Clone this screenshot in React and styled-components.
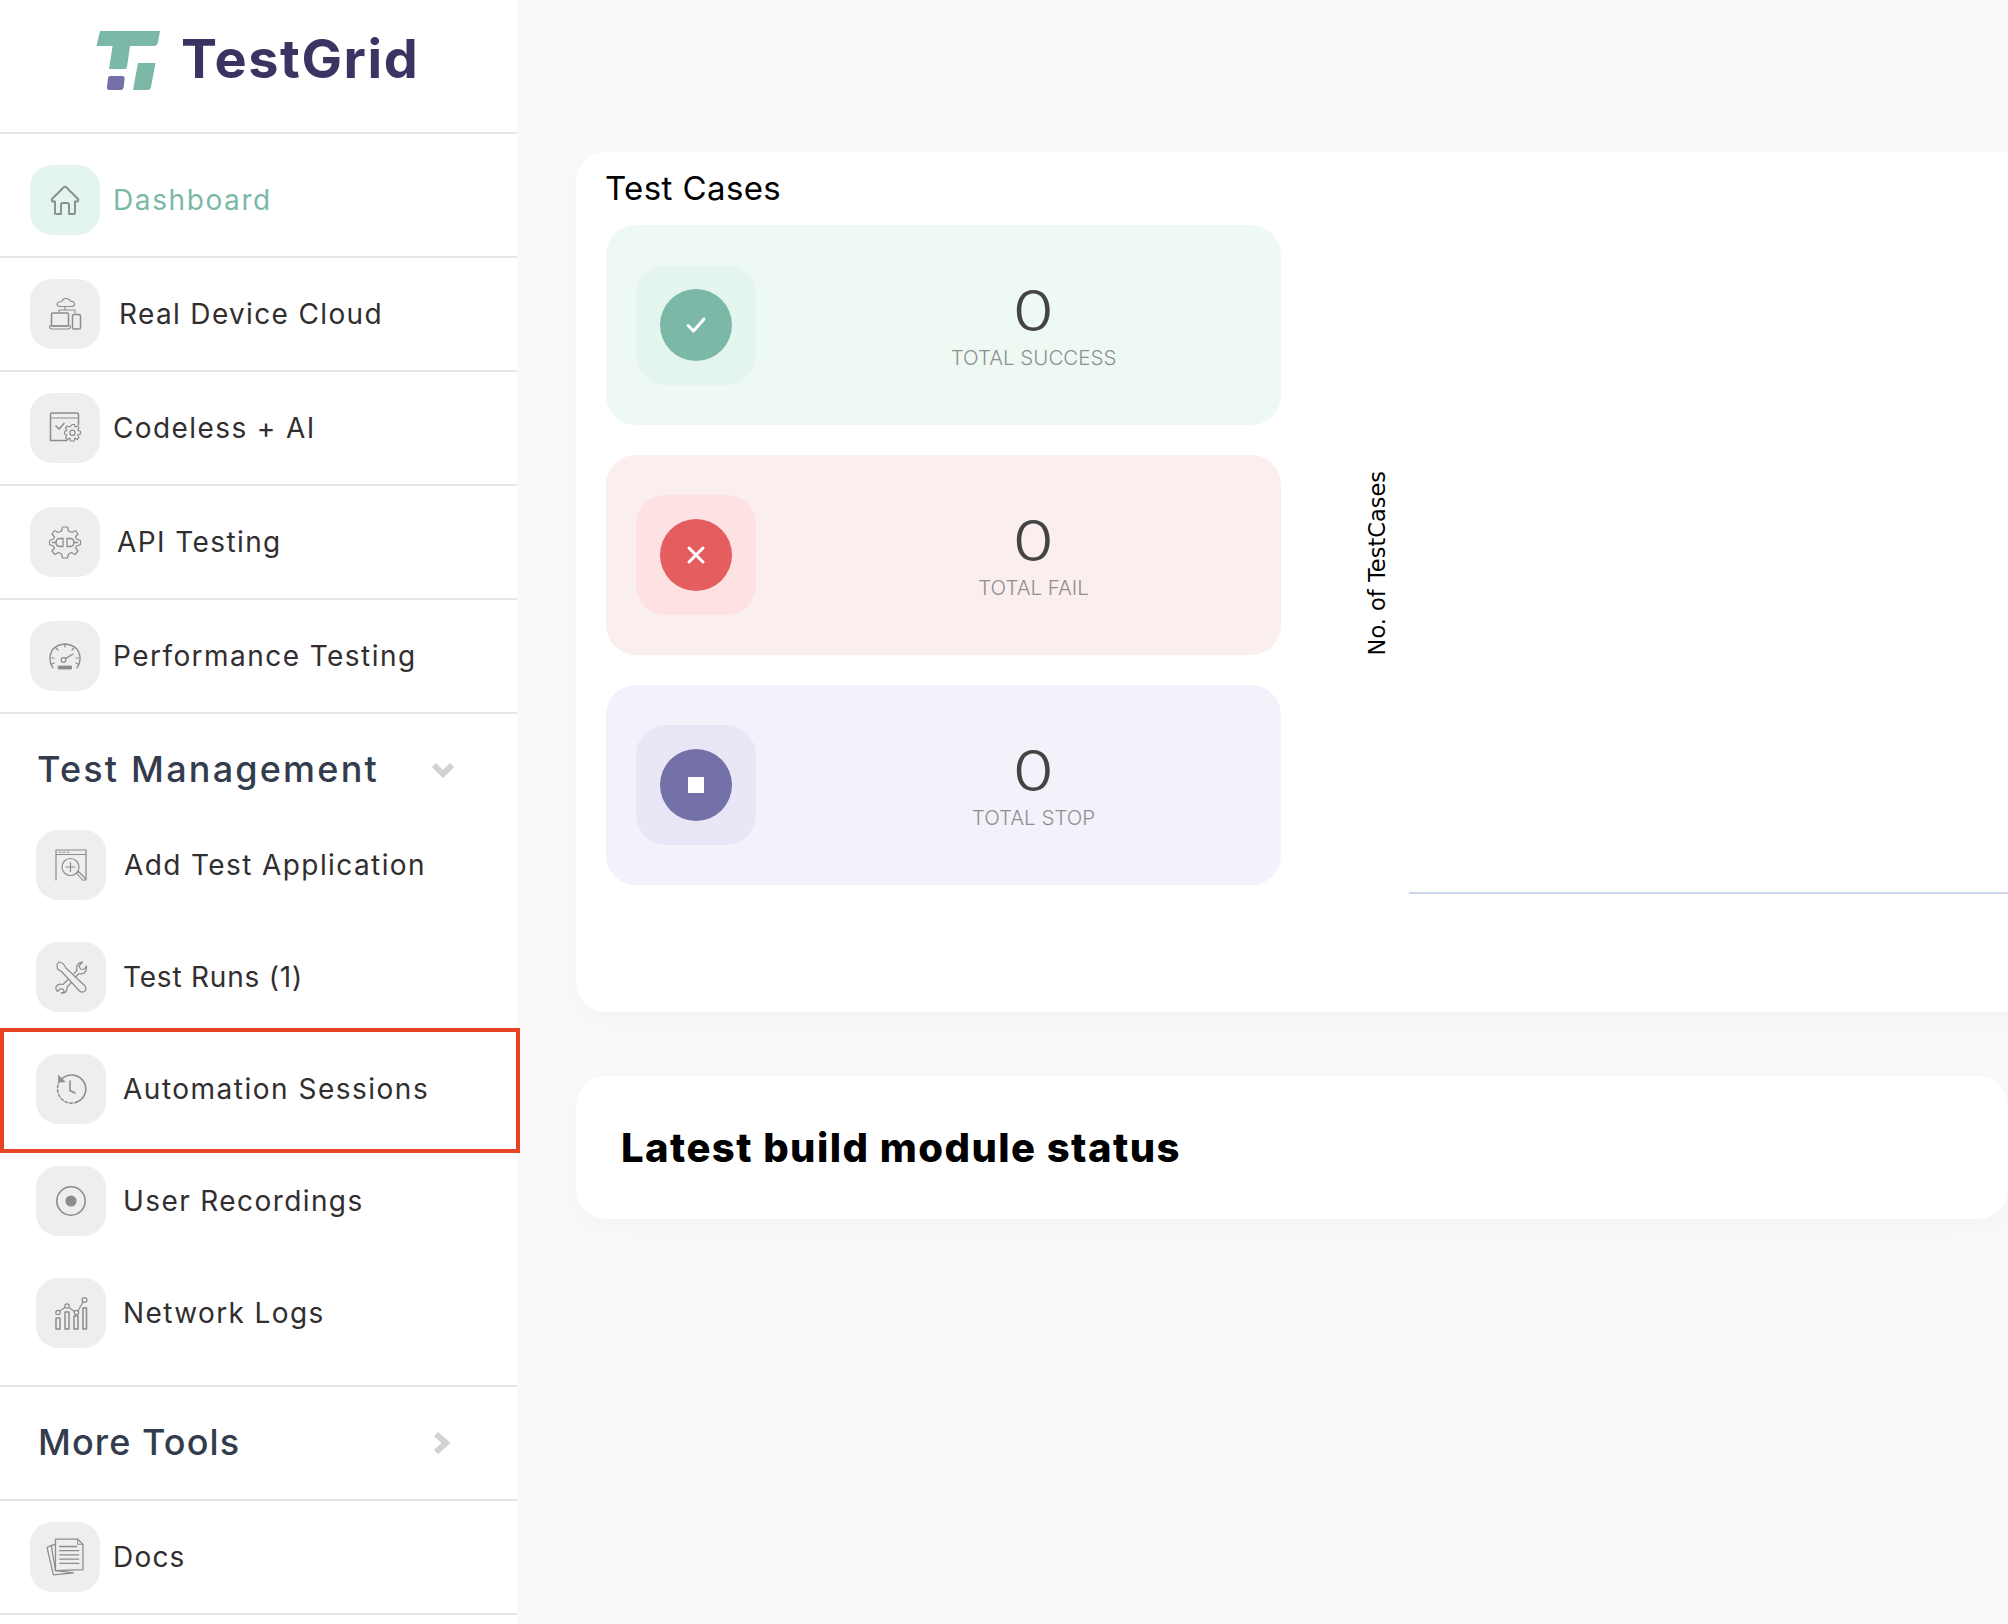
import React from "react"
import styled, { createGlobalStyle } from "styled-components"

const GlobalStyle = createGlobalStyle`
    html, body {
        margin: 0;
        padding: 0;
        background: #fafafc;
    }
    * {
        box-sizing: border-box;
    }
`

const Icons = {
    home: (
        <>
            <path d="M3 15 L14.5 3.5 Q16 2.2 17.5 3.5 L29 15 Q30 17 28 17.5 L26 17.5 L26 29 Q26 30 25 30 L20 30 L20 21 Q20 19 18 19 L14 19 Q12 19 12 21 L12 30 L7 30 Q6 30 6 29 L6 17.5 L4 17.5 Q2 17 3 15 Z" strokeWidth="1.9" />
        </>
    ),
    cloud: (
        <>
            <path d="M11 8.5 H22 Q26 8.5 25.5 5.5 Q25 3 22 3.5 Q20.5 0.5 17 0.5 Q13.5 0.5 13 3.5 Q8.5 3.5 8 6 Q8 8.5 11 8.5 Z" strokeWidth="1.1" />
            <path d="M16 8.5 V12 M10 15 V12 H26 V15" strokeWidth="1.1" />
            <rect x="2.5" y="15" width="17" height="13" rx="1.2" />
            <path d="M0.5 28 H21.5 Q21.5 31 19.5 31 H2.5 Q0.5 31 0.5 28 Z" strokeWidth="1.1" />
            <rect x="23.5" y="16.5" width="8" height="14.5" rx="1.6" />
        </>
    ),
    codeless: (
        <>
            <path d="M18 28.5 H1.5 V2.5 Q1.5 1 3 1 H28 Q29.5 1 29.5 2.5 V13" />
            <path d="M1.5 6 H29.5" strokeWidth="1.1" />
            <path d="M7 14 L10 17 L15 11.5" />
            <path d="M23 12.5 L25.5 12.5 L26 15 L28.5 14 L30 16 L28.5 18 L31.5 19.5 V22 L28.5 23 L30 25.5 L28 27.5 L26 26 L25 29 H21.5 L21 26 L18.5 27.5 L16.5 25.5 L18 23 L15.5 22 V19.5 L18 18.5 L16.5 16 L18.5 14 L21 15 Z" strokeWidth="1.2" />
            <circle cx="23.5" cy="20.8" r="2.6" strokeWidth="1.2" />
        </>
    ),
    api: (
        <>
            <path d="M13.5 1 H18.5 L19.5 5 L23 6.5 L26.5 4.5 L29 8 L26.5 11 L27.5 13 L31.5 14.5 V18.5 L27.5 20 L26.5 22 L29 25 L26 28.5 L22.5 26.5 L19.5 28 L18.5 32 H13.5 L12.5 28 L9.5 26.5 L6 28.5 L3 25 L5.5 22 L4.5 20 L0.5 18.5 V14.5 L4.5 13 L5.5 11 L3 8 L5.5 4.5 L9 6.5 L12.5 5 Z" strokeWidth="1.2" />
            <path d="M14 12.5 H10.5 Q7 13 7 16.5 Q7 20 10.5 20.5 H14 Z M18 12.5 H21.5 Q25 13 25 16.5 Q25 20 21.5 20.5 H18 Z" strokeWidth="1.3" />
            <path d="M3.5 16.5 H7 M25 16.5 H28.5" strokeWidth="1.3" />
        </>
    ),
    gauge: (
        <>
            <path d="M4 28 Q0.5 23 1 17 Q2.5 5 16 4 Q29.5 5 31 17 Q31.5 23 28 28" strokeWidth="1.3" />
            <path d="M16 4 V7 M7 8 L9 10 M25 8 L23 10 M2 18 H5 M27 18 H30 M3 24 L5 23 M29 24 L27 23" strokeWidth="1.2" />
            <circle cx="14.5" cy="20" r="2.4" strokeWidth="1.2" />
            <path d="M16.5 18.6 L24 14" strokeWidth="1.3" />
            <rect x="9.5" y="26" width="13" height="3" fill="#8c8c8c" strokeWidth="0.8" />
        </>
    ),
    application: (
        <>
            <path d="M1 31 V1 H31 V31 M1 5.5 H31" strokeWidth="1.2" />
            <path d="M4 3.2 H6 M8 3.2 H10 M12 3.2 H14" strokeWidth="1" />
            <circle cx="15.5" cy="18" r="8.5" strokeWidth="1.2" />
            <path d="M15.5 13.5 V22.5 M11 18 H20" strokeWidth="1.2" />
            <path d="M21.5 24 L23.5 22.5 L30 29 Q30.5 31 28.5 31.5 Q27.5 31.5 21.5 24 Z" strokeWidth="1.2" />
        </>
    ),
    tools: (
        <>
            <path d="M2 3.5 L4 1 L8 2.5 L11 7 L30 25 Q32 28 29.5 30.5 Q27 32 24.5 30 L7 11 L2.5 8 Z" strokeWidth="1.2" />
            <path d="M19 12.5 L22 9.5 Q20.5 4 25 1.5 L27.5 1 L24 5 L25.5 8 L29 8.5 L31.5 5 Q32 10 29 12 Q26.5 13.5 24 12.5 L20.5 16" strokeWidth="1.2" />
            <path d="M12.5 19 L8 23.5 Q3 22 1 26 Q0.5 29 2.5 30.5 L5.5 27.5 L8.5 28.5 L9 31 L6 32 Q11 32.5 12 28 L12 26 L16 22" strokeWidth="1.2" />
        </>
    ),
    history: (
        <>
            <path d="M6 6.5 Q10.5 2 16.5 2 A14 14 0 0 1 22 29" />
            <path d="M22 29 A14 14 0 0 1 2.5 16 Q2.5 10 6 6.5" strokeDasharray="2.6 2.2" />
            <path d="M3.5 2.5 L3.5 9 L10 9 Z" fill="#8c8c8c" strokeWidth="0.6" />
            <path d="M15 8 V17.5 L20 20" strokeWidth="1.6" />
        </>
    ),
    record: (
        <>
            <circle cx="16" cy="16" r="14.2" strokeWidth="1.6" />
            <circle cx="16" cy="16" r="5.6" fill="#8c8c8c" stroke="none" />
        </>
    ),
    chart: (
        <>
            <rect x="1" y="21" width="4" height="11" />
            <rect x="10" y="15" width="4" height="17" />
            <rect x="19" y="19" width="4" height="13" />
            <rect x="28" y="11" width="3.5" height="21" />
            <path d="M4.5 14 L10 10.5 M14 10.5 L19.5 14.5 M23 14 L28 5" strokeWidth="1.2" />
            <circle cx="3" cy="15.5" r="2.2" strokeWidth="1.2" />
            <circle cx="12" cy="9" r="2.2" strokeWidth="1.2" />
            <circle cx="21.5" cy="15.5" r="2.2" strokeWidth="1.2" />
            <circle cx="29.5" cy="3" r="2.4" strokeWidth="1.2" />
        </>
    ),
    docs: (
        <>
            <path d="M9 1 H30 L35 6 V30 L9 31 Z" strokeWidth="1.2" />
            <path d="M30 1 V6 H35" strokeWidth="1" />
            <path d="M13 8 H29 M13 12 H31 M13 16 H31 M13 20 H31 M13 24 H31" strokeWidth="1.3" />
            <path d="M9 6 L5 7 L9 31 L26 33 L9 31 M5 7 L1 9 L7 35 L26 33" strokeWidth="1.2" />
        </>
    ),
}

function NavIcon({ name }) {
    const wide = name === "docs"
    return (
        <GlyphSvg viewBox={wide ? "0 0 36 36" : "0 0 33 33"} $wide={wide}>
            {Icons[name]}
        </GlyphSvg>
    )
}

function NavItem({ icon, label, gap, spacing, active }) {
    return (
        <>
            <IconTile $active={active}>
                <NavIcon name={icon} />
            </IconTile>
            <NavLabel $gap={gap} $spacing={spacing} $active={active}>{label}</NavLabel>
        </>
    )
}

const topItems = [
    { icon: "cloud", label: "Real Device Cloud", gap: 19, spacing: 1.35 },
    { icon: "codeless", label: "Codeless + AI", gap: 13, spacing: 1.4 },
    { icon: "api", label: "API Testing", gap: 17, spacing: 1.4 },
    { icon: "gauge", label: "Performance Testing", gap: 13, spacing: 1.45 },
]

const managementItems = [
    { icon: "application", label: "Add Test Application", gap: 18, spacing: 1.4 },
    { icon: "tools", label: "Test Runs (1)", gap: 17, spacing: 0.8 },
    { icon: "history", label: "Automation Sessions", gap: 17, spacing: 1.5, marked: true },
    { icon: "record", label: "User Recordings", gap: 17, spacing: 1.4 },
    { icon: "chart", label: "Network Logs", gap: 17, spacing: 1.4 },
]

const stats = [
    { kind: "success", label: "TOTAL SUCCESS" },
    { kind: "fail", label: "TOTAL FAIL" },
    { kind: "stop", label: "TOTAL STOP" },
]

const statColors = {
    success: { card: "#eff9f4", tile: "#e4f5ed", dot: "#7bb8a8" },
    fail: { card: "#fbeeee", tile: "#fde1e3", dot: "#e45d5f" },
    stop: { card: "#f3f2fb", tile: "#e9e7f5", dot: "#7470a8" },
}

function StatIcon({ kind }) {
    if (kind === "stop") return <StopSquare />
    return (
        <svg width="26" height="26" viewBox="0 0 26 26" fill="none" stroke="#fff" strokeWidth="3" strokeLinecap="round" strokeLinejoin="round">
            {kind === "success" ? <path d="M5 13.5 L10.5 19 L21 7" /> : <path d="M6 6 L20 20 M20 6 L6 20" />}
        </svg>
    )
}

function App() {
    return (
        <Page>
            <GlobalStyle />
            <Sidebar>
                <LogoBar>
                    <svg width="65" height="60" viewBox="0 0 65 60">
                        <path d="M4 0 H64 L62 11 Q61.2 15 58 15 H34 L31 36 Q30.6 38 29 38 H13 L16.6 15 H0.5 Z" fill="#7bb8a8" />
                        <path d="M42 32 H59.5 L55 56 Q54.3 59 52 59 H37 Z" fill="#7bb8a8" />
                        <path d="M14 45 H26 Q29 45 28.6 48 L27.6 56 Q27.2 59 25 59 H13.5 Q10.6 59 11 56 L12 47 Q12.2 45 14 45 Z" fill="#7470a8" />
                    </svg>
                    <LogoText>TestGrid</LogoText>
                </LogoBar>

                <NavRow $top={31}>
                    <NavItem icon="home" label="Dashboard" gap={13} spacing={1.6} active />
                </NavRow>
                {topItems.map(item => (
                    <NavRow key={item.label}>
                        <NavItem {...item} />
                    </NavRow>
                ))}

                <Section>
                    <SectionHead>
                        <SectionTitle $spacing={2.2}>Test Management</SectionTitle>
                        <Chevron width="24" height="16" viewBox="0 0 24 16">
                            <path d="M3 3 L12 12 L21 3" />
                        </Chevron>
                    </SectionHead>
                    <SubList>
                        {managementItems.map(item => (
                            <SubRow key={item.label}>
                                <NavItem icon={item.icon} label={item.label} gap={item.gap} spacing={item.spacing} />
                                {item.marked && <Marker />}
                            </SubRow>
                        ))}
                    </SubList>
                </Section>

                <ToolsRow>
                    <SectionTitle $spacing={1.1}>More Tools</SectionTitle>
                    <Chevron width="18" height="24" viewBox="0 0 18 24">
                        <path d="M3 3 L13 12 L3 21" />
                    </Chevron>
                </ToolsRow>
                <NavRow>
                    <NavItem icon="docs" label="Docs" gap={13} spacing={1.2} />
                </NavRow>
            </Sidebar>

            <Main>
                <ChartCard>
                    <StatsColumn>
                        <CardTitle>Test Cases</CardTitle>
                        <StatList>
                            {stats.map(stat => (
                                <StatCard key={stat.kind} $kind={stat.kind}>
                                    <StatTile $kind={stat.kind}>
                                        <StatDot $kind={stat.kind}>
                                            <StatIcon kind={stat.kind} />
                                        </StatDot>
                                    </StatTile>
                                    <StatBody>
                                        <StatValue>0</StatValue>
                                        <StatLabel>{stat.label}</StatLabel>
                                    </StatBody>
                                </StatCard>
                            ))}
                        </StatList>
                    </StatsColumn>
                    <ChartArea>
                        <AxisTitle>No. of TestCases</AxisTitle>
                        <AxisLine />
                    </ChartArea>
                </ChartCard>

                <BuildCard>
                    <BuildTitle>Latest build module status</BuildTitle>
                </BuildCard>
            </Main>
        </Page>
    )
}

const Page = styled.div`
    display: flex;
    width: 2008px;
    height: 1624px;
    overflow: hidden;
    background: #fafafc;
    font-family: Inter, "Liberation Sans", sans-serif;
`

const Sidebar = styled.aside`
    flex: 0 0 517px;
    display: flex;
    flex-direction: column;
    background: #fff;
    box-shadow: 0 0 6px rgba(0, 0, 0, 0.03);
    position: relative;
    z-index: 1;
`

const LogoBar = styled.div`
    display: flex;
    align-items: center;
    gap: 20px;
    height: 134px;
    padding: 0 0 10px 96px;
    border-bottom: 2px solid #e5e5e5;
`

const LogoText = styled.span`
    margin-top: -5px;
    font-size: 54px;
    font-weight: 700;
    letter-spacing: 1.6px;
    color: #3a3462;
`

const NavRow = styled.div`
    display: flex;
    align-items: center;
    padding: ${props => props.$top || 21}px 30px 21px;
    border-bottom: 2px solid #e5e5e5;
`

const IconTile = styled.div`
    flex: 0 0 70px;
    height: 70px;
    display: flex;
    align-items: center;
    justify-content: center;
    border-radius: 22px;
    background: ${props => (props.$active ? "#e3f5ee" : "#eeeeee")};
`

const GlyphSvg = styled.svg`
    width: ${props => (props.$wide ? 38 : 33)}px;
    height: ${props => (props.$wide ? 38 : 33)}px;
    fill: none;
    stroke: #8c8c8c;
    stroke-width: 1.5;
    stroke-linejoin: round;
    stroke-linecap: round;
`

const NavLabel = styled.span`
    margin-left: ${props => props.$gap}px;
    font-size: 28px;
    letter-spacing: ${props => props.$spacing}px;
    color: ${props => (props.$active ? "#7bb8a8" : "#322e30")};
`

const Section = styled.div`
    display: flex;
    flex-direction: column;
    padding-bottom: 37px;
    border-bottom: 2px solid #e5e5e5;
`

const SectionHead = styled.div`
    display: flex;
    align-items: center;
    justify-content: space-between;
    height: 112px;
    margin-bottom: 4px;
    padding: 0 62px 0 37px;
`

const SectionTitle = styled.h3`
    margin: 0 0 2px;
    font-size: 36px;
    font-weight: 500;
    letter-spacing: ${props => props.$spacing}px;
    color: #333c4d;
`

const Chevron = styled.svg`
    fill: none;
    stroke: #d2d2d2;
    stroke-width: 6;
`

const SubList = styled.div`
    display: flex;
    flex-direction: column;
    gap: 42px;
    padding-left: 36px;
`

const SubRow = styled.div`
    display: flex;
    align-items: center;
    position: relative;
`

const Marker = styled.div`
    position: absolute;
    top: -26px;
    bottom: -29px;
    left: -36px;
    right: -3px;
    border: 4px solid #ea4225;
`

const ToolsRow = styled.div`
    display: flex;
    align-items: center;
    justify-content: space-between;
    height: 114px;
    padding: 0 66px 0 38px;
    border-bottom: 2px solid #e5e5e5;
`

const Main = styled.main`
    flex: 1;
    min-width: 0;
    display: flex;
    flex-direction: column;
    gap: 64px;
    padding: 152px 0 0 59px;
`

const ChartCard = styled.section`
    display: flex;
    flex: none;
    width: 1600px;
    height: 860px;
    border-radius: 30px;
    background: #fff;
    box-shadow: 0 8px 30px rgba(0, 0, 0, 0.035);
`

const StatsColumn = styled.div`
    flex: 0 0 705px;
    padding: 16px 0 0 29px;
`

const CardTitle = styled.h2`
    margin: 0 0 16px;
    height: 41px;
    font-size: 33px;
    line-height: 41px;
    font-weight: 400;
    letter-spacing: 0.4px;
    color: #000;
`

const StatList = styled.div`
    display: flex;
    flex-direction: column;
    gap: 30px;
    margin-left: 1px;
`

const StatCard = styled.div`
    display: flex;
    align-items: center;
    width: 675px;
    height: 200px;
    padding-left: 30px;
    border-radius: 30px;
    background: ${props => statColors[props.$kind].card};
`

const StatTile = styled.div`
    flex: 0 0 120px;
    height: 120px;
    display: flex;
    align-items: center;
    justify-content: center;
    border-radius: 30px;
    background: ${props => statColors[props.$kind].tile};
`

const StatDot = styled.div`
    width: 72px;
    height: 72px;
    display: flex;
    align-items: center;
    justify-content: center;
    border-radius: 50%;
    background: ${props => statColors[props.$kind].dot};
`

const StopSquare = styled.div`
    width: 16px;
    height: 16px;
    background: #fff;
`

const StatBody = styled.div`
    flex: 1;
    display: flex;
    flex-direction: column;
    align-items: center;
    padding-left: 30px;
`

const StatValue = styled.div`
    font-size: 56px;
    line-height: 64px;
    font-weight: 300;
    color: #444;
    transform: scaleX(1.2);
`

const StatLabel = styled.div`
    margin-top: 1px;
    font-size: 20.5px;
    line-height: 28px;
    font-weight: 300;
    color: #8f8f8f;
`

const ChartArea = styled.div`
    flex: 1;
    position: relative;
`

const AxisTitle = styled.span`
    position: absolute;
    left: 83px;
    top: 319px;
    writing-mode: vertical-rl;
    transform: rotate(180deg);
    font-family: "DejaVu Sans", "Open Sans", sans-serif;
    font-size: 22.5px;
    color: #000;
`

const AxisLine = styled.div`
    position: absolute;
    left: 128px;
    right: 0;
    top: 740px;
    height: 2px;
    background: #ccd6eb;
`

const BuildCard = styled.section`
    display: flex;
    align-items: center;
    flex: none;
    width: 1432px;
    height: 143px;
    padding-left: 45px;
    border-radius: 30px;
    background: #fff;
    box-shadow: 0 8px 30px rgba(0, 0, 0, 0.035);
`

const BuildTitle = styled.h2`
    margin: 0;
    font-size: 40px;
    font-weight: 800;
    letter-spacing: 1.45px;
    color: #000;
`

export default App
